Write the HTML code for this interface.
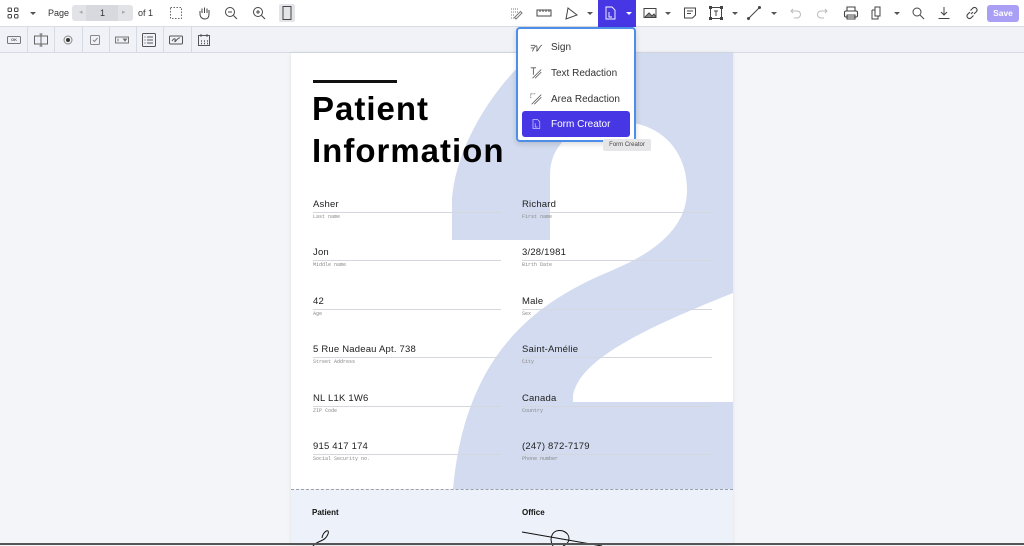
<!DOCTYPE html>
<html><head><meta charset="utf-8"><style>
*{margin:0;padding:0;box-sizing:border-box}
body{width:1024px;height:545px;overflow:hidden;background:#f4f5f8;font-family:"Liberation Sans",sans-serif;position:relative;color:#222}
.tb{position:absolute;left:0;top:0;width:1024px;height:27px;background:#fff;border-bottom:1px solid #d9dce3}
.tb2{position:absolute;left:0;top:27px;width:1024px;height:26px;background:#f0f2f7;border-bottom:1px solid #d6dae3}
.ic{position:absolute;top:5px;width:16px;height:16px}
.ic2{position:absolute;top:32px;width:16px;height:16px}
.sep{position:absolute;top:27px;width:1px;height:26px;background:#d6dae3}
.caret{position:absolute;top:12px;width:0;height:0;border-left:3px solid transparent;border-right:3px solid transparent;border-top:3px solid #555}
.page{position:absolute;left:291px;top:53px;width:442px;height:492px;background:#fff;box-shadow:0 0 4px rgba(0,0,0,.08)}
.foot{position:absolute;left:291px;top:489px;width:442px;height:56px;background:#edf1f9;border-top:1px dashed #9aa0ad}
.v{position:absolute;font-size:9.5px;color:#222;letter-spacing:.2px}
.ln{position:absolute;height:1px;background:#d4d7dd}
.lb{position:absolute;font-family:"Liberation Mono",monospace;font-size:5px;color:#888}
.menu{position:absolute;left:516px;top:27px;width:120px;height:115px;background:#fff;border:2px solid #4d8fe8;border-radius:4px;box-shadow:0 2px 6px rgba(0,0,0,.15)}
.mi{position:absolute;left:33px;font-size:10px;color:#333}
</style></head><body>
<div class="tb">
 <svg class="ic" style="left:5px" viewBox="0 0 16 16" fill="none" stroke="#444" stroke-width="1"><rect x="3" y="3" width="3.5" height="3.5" rx="1"/><rect x="9.5" y="3" width="3.5" height="3.5" rx="1"/><rect x="3" y="9.5" width="3.5" height="3.5" rx="1"/><rect x="9.5" y="9.5" width="3.5" height="3.5" rx="1"/></svg>
 <div class="caret" style="left:30px"></div>
 <div style="position:absolute;left:48px;top:8px;font-size:9px;color:#333">Page</div>
 <div style="position:absolute;left:72px;top:5px;width:61px;height:16px;background:#e2e3e7;border-radius:3px"></div>
 <div style="position:absolute;left:86px;top:5px;width:32px;height:16px;background:#d8d9de"></div>
 <div style="position:absolute;left:79px;top:8px;font-size:7px;color:#aaa">◂</div>
 <div style="position:absolute;left:122px;top:8px;font-size:7px;color:#aaa">▸</div>
 <div style="position:absolute;left:100px;top:8px;font-size:9px;color:#333">1</div>
 <div style="position:absolute;left:138px;top:8px;font-size:9px;color:#333">of 1</div>
 <svg class="ic" style="left:168px" viewBox="0 0 16 16" fill="none" stroke="#666" stroke-dasharray="1.5 1.5"><rect x="2.5" y="2.5" width="11" height="11"/></svg>
 <svg class="ic" style="left:196px" viewBox="0 0 16 16" fill="none" stroke="#444" stroke-width="1"><path d="M4 9V6m0 3c0 3 2 5 5 5s4-2 4-5V5M6 8V3.5M8.5 8V2.5M11 8V3.5M13 8V5"/></svg>
 <svg class="ic" style="left:223px" viewBox="0 0 16 16" fill="none" stroke="#444"><circle cx="7" cy="7" r="4.5"/><path d="M10.5 10.5L14 14M5 7h4"/></svg>
 <svg class="ic" style="left:251px" viewBox="0 0 16 16" fill="none" stroke="#444"><circle cx="7" cy="7" r="4.5"/><path d="M10.5 10.5L14 14M5 7h4M7 5v4"/></svg>
 <div style="position:absolute;left:279px;top:4px;width:16px;height:18px;background:#e4e5e9;border-radius:2px"></div>
 <svg class="ic" style="left:279px" viewBox="0 0 16 16" fill="none" stroke="#444"><rect x="4" y="1.5" width="8" height="13"/></svg>
 <svg class="ic" style="left:508px" viewBox="0 0 16 16" fill="none" stroke="#777" stroke-width="1"><path d="M3 4h8M3 7h8M3 10h4M3 13h3" stroke-dasharray="1 1"/><path d="M8 14l6-6-1.5-1.5-6 6z"/></svg>
 <svg class="ic" style="left:536px" viewBox="0 0 16 16" fill="none" stroke="#444"><rect x="1" y="5" width="14" height="6"/><path d="M4 5v2M7 5v2M10 5v2M13 5v2"/></svg>
 <svg class="ic" style="left:563px" viewBox="0 0 16 16" fill="none" stroke="#444"><path d="M3 14L5 3l9 7z"/></svg>
 <div class="caret" style="left:587px"></div>
 <div style="position:absolute;left:598px;top:0;width:38px;height:27px;background:#4636e3"></div>
 <svg class="ic" style="left:602px" viewBox="0 0 16 16" fill="none" stroke="#fff" stroke-width=".9"><path d="M4 2h6l3 3v9H4z M7 7v5h3"/></svg>
 <div class="caret" style="left:626px;border-top-color:#fff"></div>
 <svg class="ic" style="left:642px" viewBox="0 0 16 16" fill="none" stroke="#444"><rect x="2" y="3.5" width="12" height="9"/><path d="M3 12l4-4 3 3 2-2 2 3" fill="#888"/></svg>
 <div class="caret" style="left:665px"></div>
 <svg class="ic" style="left:682px" viewBox="0 0 16 16" fill="none" stroke="#444"><path d="M2.5 3h11v7l-3 3h-8z M5 6h6M5 8.5h4"/></svg>
 <svg class="ic" style="left:708px" viewBox="0 0 16 16" fill="none" stroke="#444"><rect x="2.5" y="2.5" width="11" height="11"/><path d="M6 6h4M8 6v5"/><rect x="1.5" y="1.5" width="2" height="2" fill="#444"/><rect x="12.5" y="1.5" width="2" height="2" fill="#444"/><rect x="1.5" y="12.5" width="2" height="2" fill="#444"/><rect x="12.5" y="12.5" width="2" height="2" fill="#444"/></svg>
 <div class="caret" style="left:732px"></div>
 <svg class="ic" style="left:746px" viewBox="0 0 16 16" fill="none" stroke="#444"><path d="M2 14L14 2"/><circle cx="2.5" cy="13.5" r="1" fill="#444"/><circle cx="13.5" cy="2.5" r="1" fill="#444"/></svg>
 <div class="caret" style="left:771px"></div>
 <svg class="ic" style="left:788px" viewBox="0 0 16 16" fill="none" stroke="#bbb"><path d="M5 4L3 6l2 2M3 6h6a3.5 3.5 0 010 7H6"/></svg>
 <svg class="ic" style="left:814px" viewBox="0 0 16 16" fill="none" stroke="#bbb"><path d="M11 4l2 2-2 2M13 6H7a3.5 3.5 0 000 7h3"/></svg>
 <svg class="ic" style="left:843px" viewBox="0 0 16 16" fill="none" stroke="#444" stroke-width="1.1"><path d="M4 6V2h8v4"/><rect x="1.5" y="6" width="13" height="6" rx="1.5"/><path d="M4 10h8v4H4z"/></svg>
 <svg class="ic" style="left:869px" viewBox="0 0 16 16" fill="none" stroke="#444"><path d="M6 2h5v9H6z M3 5h3M3 5v9h6v-3"/></svg>
 <div class="caret" style="left:894px"></div>
 <svg class="ic" style="left:910px" viewBox="0 0 16 16" fill="none" stroke="#444"><circle cx="7" cy="7" r="4"/><path d="M10 10l4 4"/></svg>
 <svg class="ic" style="left:936px" viewBox="0 0 16 16" fill="none" stroke="#444"><path d="M8 2v8M5 7l3 3 3-3M2.5 13.5h11"/></svg>
 <svg class="ic" style="left:964px" viewBox="0 0 16 16" fill="none" stroke="#444" stroke-width="1.1"><path d="M7 9l2-2M6 7L3.5 9.5a2.5 2.5 0 003.5 3.5L9.5 10.5M10 9l2.5-2.5A2.5 2.5 0 009 3L6.5 5.5"/></svg>
 <div style="position:absolute;left:987px;top:5px;width:32px;height:17px;background:#a9a0f6;border-radius:3px;color:#fff;font-size:8.5px;font-weight:bold;text-align:center;line-height:17px">Save</div>
</div>
<div class="tb2">
</div>
<div class="sep" style="left:27px"></div><div class="sep" style="left:54px"></div><div class="sep" style="left:82px"></div><div class="sep" style="left:109px"></div><div class="sep" style="left:136px"></div><div class="sep" style="left:163px"></div><div class="sep" style="left:191px"></div>
<div style="position:absolute;left:7px;top:36px;width:14px;height:8px;border:1px solid #777;border-radius:1.5px;font-size:4px;font-weight:bold;text-align:center;line-height:6px;color:#555">OK</div>
<svg class="ic2" style="left:33px" viewBox="0 0 16 16" fill="none" stroke="#666"><rect x="1.5" y="4" width="13" height="8"/><path d="M8 2v12M6.5 2h3M6.5 14h3"/></svg>
<svg class="ic2" style="left:60px" viewBox="0 0 16 16" fill="none" stroke="#888"><circle cx="8" cy="8" r="4"/><circle cx="8" cy="8" r="2" fill="#333" stroke="none"/></svg>
<svg class="ic2" style="left:87px" viewBox="0 0 16 16" fill="none" stroke="#888"><rect x="3.5" y="3.5" width="9" height="9" rx="1"/><path d="M6 8l1.5 1.5L10.5 6"/></svg>
<svg class="ic2" style="left:114px" viewBox="0 0 16 16" fill="none" stroke="#777"><rect x="1.5" y="5" width="13" height="6"/><path d="M4 6.5v3"/><path d="M9.5 7h3l-1.5 2z" fill="#444"/></svg>
<svg class="ic2" style="left:141px" viewBox="0 0 16 16" fill="none" stroke="#555"><rect x="1.5" y="1.5" width="13" height="13" rx="1"/><path d="M6 5h6M6 8h6M6 11h6M3.5 5h1M3.5 8h1M3.5 11h1"/></svg>
<svg class="ic2" style="left:168px" viewBox="0 0 16 16" fill="none" stroke="#555"><rect x="1.5" y="4" width="13" height="8" rx="1"/><path d="M4 9c2-3 4-3 3 0s3-4 5-3"/></svg>
<svg class="ic2" style="left:196px" viewBox="0 0 16 16" fill="none" stroke="#555"><rect x="2.5" y="3.5" width="11" height="10"/><path d="M5 2v3M11 2v3"/><path d="M5 9h1M8 9h1M11 9h1M5 11.5h1M8 11.5h1M11 11.5h1" stroke-width="1.5"/></svg>

<div class="page">
 <svg width="442" height="492" style="position:absolute;left:0;top:0" viewBox="291 53 442 492">
  <path fill="#d2dbef" d="M452 240 L550 240 L550 175 C550 140 580 122 620 122 C660 122 687 150 687 190 C687 225 660 250 613 270 C540 300 465 350 453 490 L733 490 L733 402 L573 402 L573 395 C580 360 640 330 733 293 L733 53 L533 53 C490 90 455 150 452 200 Z"/>
 </svg>
 <div style="position:absolute;left:22px;top:27px;width:84px;height:3px;background:#111"></div>
 <div style="position:absolute;left:21px;top:35px;font-size:33px;font-weight:bold;line-height:42px;color:#000;letter-spacing:1px">Patient<br>Information</div>
</div>
<div class="foot">
 <div style="position:absolute;left:21px;top:18px;font-size:8px;font-weight:bold;color:#111">Patient</div>
 <div style="position:absolute;left:231px;top:18px;font-size:8px;font-weight:bold;color:#111">Office</div>
 <svg width="442" height="56" style="position:absolute;left:0;top:0" fill="none" stroke="#111" stroke-width="1"><path d="M22 56c5-6 12-4 15-12 2-6-5-3-6 4"/><path d="M231 42l80 14M262 56c-5-8 0-18 10-15 8 3 8 12 0 15"/></svg>
</div>

<div class="v" style="left:313px;top:199px">Asher</div><div class="ln" style="left:313px;top:212px;width:188px"></div><div class="lb" style="left:313px;top:214px">Last name</div>
<div class="v" style="left:522px;top:199px">Richard</div><div class="ln" style="left:522px;top:212px;width:190px"></div><div class="lb" style="left:522px;top:214px">First name</div>
<div class="v" style="left:313px;top:247px">Jon</div><div class="ln" style="left:313px;top:260px;width:188px"></div><div class="lb" style="left:313px;top:262px">Middle name</div>
<div class="v" style="left:522px;top:247px">3/28/1981</div><div class="ln" style="left:522px;top:260px;width:190px"></div><div class="lb" style="left:522px;top:262px">Birth Date</div>
<div class="v" style="left:313px;top:296px">42</div><div class="ln" style="left:313px;top:309px;width:188px"></div><div class="lb" style="left:313px;top:311px">Age</div>
<div class="v" style="left:522px;top:296px">Male</div><div class="ln" style="left:522px;top:309px;width:190px"></div><div class="lb" style="left:522px;top:311px">Sex</div>
<div class="v" style="left:313px;top:344px">5 Rue Nadeau Apt. 738</div><div class="ln" style="left:313px;top:357px;width:188px"></div><div class="lb" style="left:313px;top:359px">Street Address</div>
<div class="v" style="left:522px;top:344px">Saint-Amélie</div><div class="ln" style="left:522px;top:357px;width:190px"></div><div class="lb" style="left:522px;top:359px">City</div>
<div class="v" style="left:313px;top:393px">NL L1K 1W6</div><div class="ln" style="left:313px;top:406px;width:188px"></div><div class="lb" style="left:313px;top:408px">ZIP Code</div>
<div class="v" style="left:522px;top:393px">Canada</div><div class="ln" style="left:522px;top:406px;width:190px"></div><div class="lb" style="left:522px;top:408px">Country</div>
<div class="v" style="left:313px;top:441px">915 417 174</div><div class="ln" style="left:313px;top:454px;width:188px"></div><div class="lb" style="left:313px;top:456px">Social Security no.</div>
<div class="v" style="left:522px;top:441px">(247) 872-7179</div><div class="ln" style="left:522px;top:454px;width:190px"></div><div class="lb" style="left:522px;top:456px">Phone number</div>

<div class="menu">
 <svg style="position:absolute;left:11px;top:11px" width="14" height="14" viewBox="0 0 16 16" fill="none" stroke="#555"><path d="M2 6h5M2 9h3M4 13c3-8 6-8 5-2s4-6 6-5"/></svg>
 <div class="mi" style="top:13px">Sign</div>
 <svg style="position:absolute;left:11px;top:37px" width="14" height="14" viewBox="0 0 16 16" fill="none" stroke="#555"><path d="M2 2h6M5 2v8M4 14L14 4M7 14l7-7"/></svg>
 <div class="mi" style="top:39px">Text Redaction</div>
 <svg style="position:absolute;left:11px;top:63px" width="14" height="14" viewBox="0 0 16 16" fill="none" stroke="#555"><path d="M2 2h6M2 2v6" stroke-dasharray="1 1"/><path d="M3 14L14 3M6 14l8-8"/></svg>
 <div class="mi" style="top:65px">Area Redaction</div>
 <div style="position:absolute;left:4px;top:82px;width:108px;height:26px;background:#4636e3;border-radius:3px"></div>
 <svg style="position:absolute;left:12px;top:88px" width="12" height="14" viewBox="0 0 16 16" fill="none" stroke="#cfcaff"><path d="M4 2h6l3 3v9H4z M7 7v5h3"/></svg>
 <div class="mi" style="top:90px;color:#fff">Form Creator</div>
</div>
<div style="position:absolute;left:603px;top:139px;width:48px;height:12px;background:#e6e6e8;border-radius:2px;font-size:6px;color:#444;text-align:center;line-height:12px">Form Creator</div>
<div style="position:absolute;left:0;top:543px;width:1024px;height:2px;background:#555"></div>
</body></html>
